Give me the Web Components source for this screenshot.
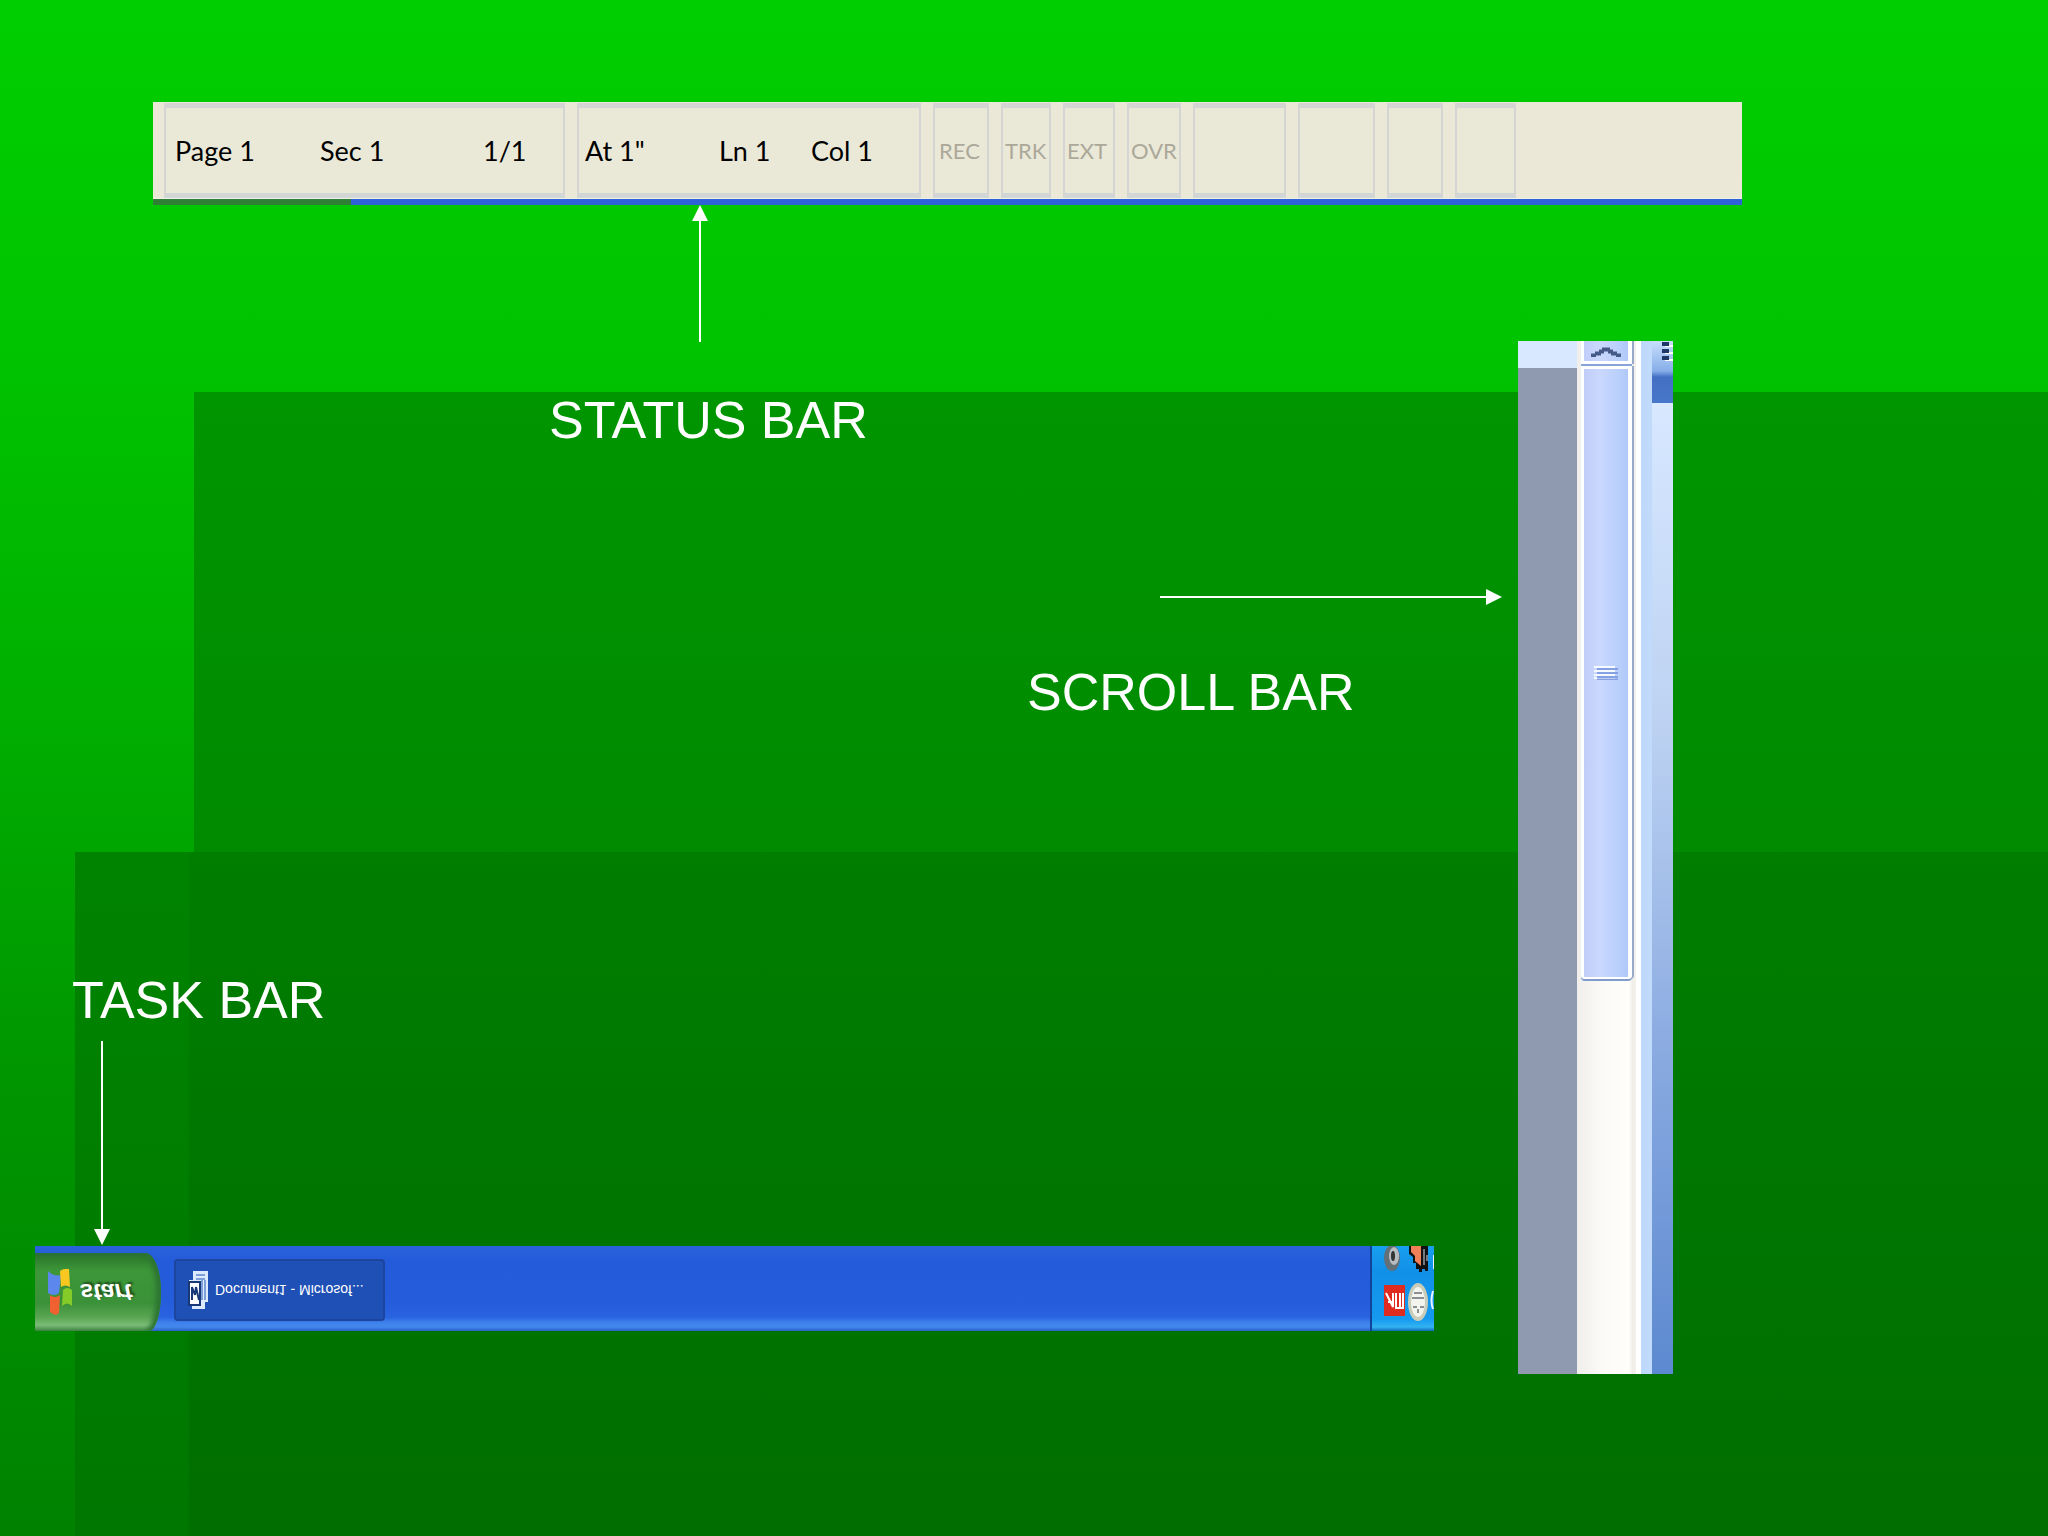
<!DOCTYPE html>
<html lang="en">
<head>
<meta charset="utf-8">
<title>Parts of the window</title>
<style>
html,body{margin:0;height:100%}
body{font-family:"Liberation Sans",Arial,sans-serif}
</style>
</head>
<body>
<slide-deck></slide-deck>
<script>
const define=(name,html)=>customElements.define(name,class extends HTMLElement{
  constructor(){super();this.attachShadow({mode:'open'}).innerHTML=html;}
});

define('slide-label',`<style>:host{display:block;color:#fff;font-size:52px;line-height:60px;white-space:nowrap}</style><slot></slot>`);

/* An arrow that fills its host; its direction comes from the "to" attribute. */
define('slide-arrow',`<style>
:host{display:flex;flex-direction:column;align-items:center;width:16px}
i{background:#fff;flex:1;width:2px}
b{width:16px;height:16px;background:#fff;clip-path:polygon(50% 0,100% 100%,0 100%)}
:host([to=down]){flex-direction:column-reverse}
:host([to=down]) b{clip-path:polygon(0 0,100% 0,50% 100%)}
:host([to=right]){flex-direction:row-reverse;width:auto;height:16px}
:host([to=right]) i{height:2px;width:auto}
:host([to=right]) b{clip-path:polygon(0 0,100% 50%,0 100%)}
</style><b></b><i></i>`);

define('status-cell',`<style>
:host{display:flex;align-items:center;box-sizing:border-box;flex:none;border:solid #d5d5d4;border-width:5px 2px;border-bottom-color:#d2d6d5;padding-left:6px;background:#eae9d8;white-space:nowrap;color:#000}
:host([off]){color:#aca899}
</style><slot></slot>`);

define('status-bar',`<style>
:host{display:block;font-family:Lato,"Liberation Sans",sans-serif;font-size:27px;line-height:36px;background:#ebe8d8}
.row{display:flex;gap:12px;height:97px;padding:1px 0 0 11px;box-sizing:border-box;border-bottom:1px solid #eef0ea}
.strip{display:flex;height:6px;background:#2f62d6}
.strip i{width:198px;background:#2f8034}
.w1{width:401px}.w2{width:344px}.w3{width:56px}.w4{width:50px}.w5{width:52px}.w6{width:54px}.w7{width:93px}.w8{width:77px}.w9{width:61px}
.w1{padding-left:9px}
.c1{width:145px}.c2{width:163px}.c3{width:134px}.c4{width:92px}
[off]{font-size:22px;padding-left:4px}
.w4,.w5,.w6{padding-left:2px}
</style>
<div class="row">
<status-cell class="w1"><span class="c1">Page 1</span><span class="c2">Sec 1</span><span>1/1</span></status-cell>
<status-cell class="w2"><span class="c3">At 1"</span><span class="c4">Ln 1</span><span>Col 1</span></status-cell>
<status-cell class="w3" off>REC</status-cell>
<status-cell class="w4" off>TRK</status-cell>
<status-cell class="w5" off>EXT</status-cell>
<status-cell class="w6" off>OVR</status-cell>
<status-cell class="w7"></status-cell>
<status-cell class="w8"></status-cell>
<status-cell class="w3"></status-cell>
<status-cell class="w9"></status-cell>
</div><div class="strip"><i></i></div>`);

define('scroll-pane',`<style>
:host{display:flex;height:1033px}
.page{width:59px;background:#8f9ab1;border-top:27px solid #d8e8fe;box-sizing:border-box}
.track{width:59px;display:flex;flex-direction:column;box-sizing:border-box;padding:0 0 0 4px;background:linear-gradient(90deg,#efeeea,#fbfaf7 40%,#fffefb 88%,#f0eee9 94%,#f4f1ed)}
button{display:block;border:0;padding:0;margin:0;box-sizing:border-box;width:51px;border-left:3px solid #fbffff;border-right:4px solid #fff;background:linear-gradient(90deg,#c0cdf8,#cad8fe 35%,#b9cffb 80%,#b0c8f8)}
.btn{box-shadow:2px 0 #98a9c9}
.up{height:23px;border-bottom:3px solid #fff}
.thumb{height:613px;border-top:3px solid #fff;border-bottom:2px solid #fff;border-radius:0 0 4px 4px;margin-top:2px;box-shadow:2px 0 #98a9c9,0 -2px #88a4d6,0 2px #7f9bcb}
svg{display:block;margin:auto}
.gap{width:5px;background:#fff}
.edge{width:11px;background:linear-gradient(90deg,#bcd8fa,#c2dbfd)}
.side{flex:1;display:flex;flex-direction:column}
.top{height:62px;background:linear-gradient(#c8defd 0,#86aee8 30px,#4470c4 36px,#4876c8)}
.top svg{margin:0 0 0 auto}
.rest{flex:1;background:linear-gradient(#d7e8ff,#bdd2f2 33%,#88a9e0 68%,#5c89d0)}
</style>
<div class="page"></div>
<div class="track">
<button class="btn up" aria-label="Scroll up"><svg width="32" height="12" viewBox="0 0 32 12"><path d="M1 10.500h5M5 8.500h6M9 6.500h5M12 4.500h8M18 6.500h5M21 8.500h6M26 10.500h5" fill="none" stroke="#465a88" stroke-width="4"/></svg></button>
<button class="btn thumb" aria-label="Scroll thumb"><svg width="24" height="14" viewBox="0 0 24 14"><path d="M0 1h21M0 5h21M0 9h21M0 12h21" stroke="#f4faff" stroke-width="2"/><path d="M3 3h21M3 7h21M3 11h21M3 13.500h21" stroke="#86a0e4" stroke-width="2"/></svg></button>
</div>
<div class="gap"></div><div class="edge"></div>
<div class="side"><div class="top"><svg width="12" height="20" viewBox="0 0 12 20"><path d="M4 4h8v2H4M4 11h8v2H4M4 18h8v2H4" fill="#fff"/><path d="M1 1h7v4H1zM1 8h7v4H1zM1 15h7v4H1z" fill="#203868"/></svg></div><div class="rest"></div></div>`);

/* The bar is turned over top to bottom, icons and captions included. */
define('task-bar',`<style>
:host{display:flex;height:85px;transform:scaleY(-1);background:linear-gradient(#2a60c8 0,#4288ee 4px,#3f82ec 8px,#2963e0 14px,#245cdb 30px,#235bda 70px,#2a62dc);overflow:hidden;color:#fff}
button{border:0;margin:0;padding:0;display:flex;align-items:center;font-family:inherit;color:inherit;box-sizing:border-box;text-align:left}
.start{width:126px;height:78px;padding-left:12px;gap:7px;border-radius:0 12px 16px 0/0 40px 40px 0;background:linear-gradient(#4d9252 0,#7cbc76 6px,#58a552 14px,#3b9138 28px,#3d9739 60px,#2f7e2f 72px,#2b7038);font:italic bold 24px/36px "Liberation Sans",sans-serif;text-shadow:2px 2px 2px #1c4f1c;box-shadow:inset -5px 0 5px #2d7433}
.doc{width:211px;height:62px;margin:10px 0 0 13px;padding-left:12px;gap:6px;background:#1f50b6;border:2px solid #1b459f;border-radius:4px;font-size:14px;line-height:24px;white-space:nowrap}
.tray{margin-left:auto;width:64px;box-sizing:border-box;border-left:2px solid #12439a;background:linear-gradient(#1068b8 0,#32b4f2 4px,#159af0 12px,#1290e8 60px,#18a0ee)}
svg{display:block;flex:none}
</style>
<button class="start"><svg width="26" height="46" viewBox="0 0 26 46"><path d="M3 3Q9-2 12 2L13 20Q8 16 3 20z" fill="#f06030"/><path d="M15 9Q20 14 25 9V25Q20 29 16 25z" fill="#86cc28"/><path d="M1 22Q7 18 12 22L14 40Q7 38 1 44z" fill="#5c88ee"/><path d="M14 28Q18 31 23 28L22 46Q17 47 13 44z" fill="#f8c820"/></svg><span>start</span></button>
<button class="doc"><svg width="21" height="40" viewBox="0 0 21 40"><path d="M4 1h13v7h3v31H5v-9H1V4h3z" fill="#dceafe"/><path d="M8 31h9M8 35h9M14 10v20M17 10v20" stroke="#7f9fd8" stroke-width="2"/><path d="M1 5h11v23H1z" fill="#fff" stroke="#183878" stroke-width="2"/><path d="M4 10v13l3-8 1 8 3-13" fill="none" stroke="#183878" stroke-width="2"/></svg><span>Document1 - Microsof...</span></button>
<div class="tray"><svg width="62" height="85" viewBox="0 0 62 85">
<path d="M12 15h21v31H12z" fill="#e02c20"/><path d="M14 38l7-14v14M16 29h5M24 24v14M28 22v16M31 22v16M23 23h9" stroke="#fff" stroke-width="2" fill="none"/>
<ellipse cx="46" cy="29" rx="10" ry="19" fill="#c8ccb8"/><ellipse cx="46" cy="29" rx="7" ry="15" fill="#f4f4ee"/><path d="M40 33h12M41 24h4M48 24h4M42 38h8M46 18v4" stroke="#8a8f94" stroke-width="2"/>
<ellipse cx="20" cy="73" rx="8" ry="13" fill="#647078"/><ellipse cx="22" cy="75" rx="5" ry="9" fill="#b8bcc0"/><ellipse cx="21" cy="75" rx="2" ry="5" fill="#333"/>
<path d="M37 85v-8l4-3v-6h3v-6h3v-3h3v3h3v-2h3v25z" fill="#111"/><path d="M39 85v-6l4-4v-5l6-5v20z" fill="#f08058"/><path d="M52 66v16M55 70v6" stroke="#dde" stroke-width="1" fill="none"/>
<path d="M61 22q-3 8 0 18M62 62v14" stroke="#e6f2ff" stroke-width="2" fill="none"/></svg></div>`);

/* The slide is a free canvas: captions, arrows and pictures are pinned where the author put them. */
define('slide-deck',`<style>
:host{display:block;position:relative;min-height:100vh;overflow:hidden;background:linear-gradient(#00ce00 0,#00c400 22%,#00b000 45%,#009600 70%,#008200 100%)}
:host>*{position:absolute}
.p1{left:194px;right:0;top:392px;bottom:0;background:linear-gradient(#009600,#008a00 460px,#008400)}
.p2{left:75px;right:0;top:852px;bottom:0;background:linear-gradient(90deg,rgba(0,156,0,.2) 113px,transparent 115px),linear-gradient(#007e00,#007400 420px,#006e00)}
status-bar{left:153px;right:306px;top:102px}
scroll-pane{left:1518px;width:155px;top:341px}
task-bar{left:35px;right:614px;top:1246px}
.a1{left:692px;top:205px;height:137px}
.a2{left:1160px;width:342px;top:589px}
.a3{left:94px;top:1041px;height:204px}
.l1{left:549px;top:390px}
.l2{left:1027px;top:662px}
.l3{left:72px;top:970px}
</style>
<div class="p1"></div><div class="p2"></div>
<status-bar></status-bar><slide-arrow class="a1" to="up"></slide-arrow><slide-label class="l1">STATUS BAR</slide-label>
<slide-arrow class="a2" to="right"></slide-arrow><slide-label class="l2">SCROLL BAR</slide-label><scroll-pane></scroll-pane>
<slide-label class="l3">TASK BAR</slide-label><slide-arrow class="a3" to="down"></slide-arrow><task-bar></task-bar>`);
</script>
</body>
</html>
